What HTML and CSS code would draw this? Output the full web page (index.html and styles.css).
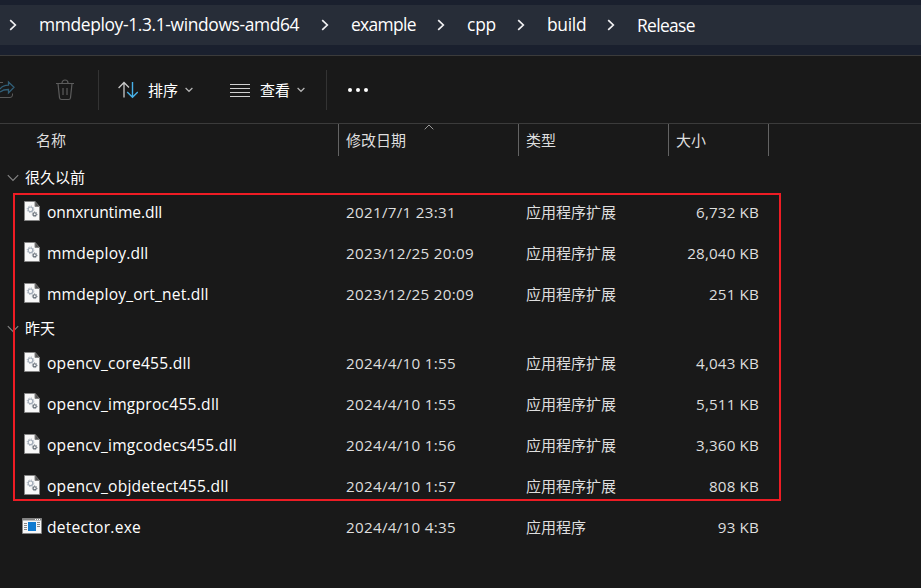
FILE: index.html
```html
<!DOCTYPE html>
<html lang="zh-CN">
<head>
<meta charset="utf-8">
<title>Release</title>
<link rel="stylesheet" href="styles.css">
</head>
<body>
<svg class="defs" width="0" height="0">
  <symbol id="next" viewBox="0 0 8 12"><path d="M1.2 1.2 6.3 6 1.2 10.8" fill="none" stroke="#f0f0f2" stroke-width="1.7"/></symbol>
  <symbol id="down" viewBox="0 0 8 6"><path d="M.6 1 4 4.3 7.4 1" fill="none" stroke="#b5b5b5" stroke-width="1.2"/></symbol>
  <symbol id="fold" viewBox="0 0 12 8"><path d="M.8 1.2 6 6.4 11.2 1.2" fill="none" stroke="#858585" stroke-width="1.1"/></symbol>
  <symbol id="dll" viewBox="0 0 16 20">
    <path d="M.5.5H11L15.5 5.500V19.500H.5z" fill="#f8f8f8" stroke="#858585"/>
    <path d="M11 .5V5.500H15.500" fill="#555" stroke="#858585"/>
    <circle cx="6.500" cy="8.300" r="2.300" fill="none" stroke="#a3adb9" stroke-width="1.200"/>
    <circle cx="6.500" cy="8.300" r="3.300" fill="none" stroke="#a3adb9" stroke-width="1" stroke-dasharray="1.200 1.392"/>
    <circle cx="10.700" cy="13.300" r="1.600" fill="none" stroke="#626b75" stroke-width="1.100"/>
    <circle cx="10.700" cy="13.300" r="2.400" fill="none" stroke="#626b75" stroke-width=".8" stroke-dasharray=".9 .985"/>
  </symbol>
  <symbol id="exe" viewBox="0 0 20 16">
    <path d="M.5.5h19v15H.5z" fill="#f7f7f7" stroke="#858585"/>
    <path d="M1 1h18v1.500H1z" fill="#858585"/>
    <path d="M13 1.500h1m1 0h1m1 0h1" stroke="#fff"/>
    <path d="M2 5.500h3m-3 2h3m-3 2h3m-3 2h3M15 4.500h3m-3 2h3m-3 2h3" stroke="#888"/>
    <path d="M6 4h8v9H6z" fill="#117bd0"/>
  </symbol>
</svg>

<header class="address">
  <nav class="crumbs">
    <svg class="next"><use href="#next"/></svg><span class="crumb c-root">mmdeploy-1.3.1-windows-amd64</span>
    <svg class="next"><use href="#next"/></svg><span class="crumb c-example">example</span>
    <svg class="next"><use href="#next"/></svg><span class="crumb c-cpp">cpp</span>
    <svg class="next"><use href="#next"/></svg><span class="crumb c-build">build</span>
    <svg class="next"><use href="#next"/></svg><span class="crumb c-release">Release</span>
  </nav>
</header>

<div class="toolbar">
  <svg class="share" viewBox="0 0 15 20"><path d="M0 2.500h3M0 17.500h10a2.500 2.500 0 0 0 2.500-2.500v-1.500" fill="none" stroke="#5a5a5a"/><path d="M0 12Q3 9.500 8.500 9.500v3.500L14 7.300 8.500 2v3.200Q2.500 5.500 0 9" fill="none" stroke="#315f78" stroke-width="1.300"/></svg>
  <svg class="trash" viewBox="0 0 20 22"><path d="M1 4.500h18M7 4a3 3 0 0 1 6 0M3 4.500l1.500 14.300q.2 1.700 2 1.700h7q1.800 0 2-1.700L17 4.500M8 9v7M12 9v7" fill="none" stroke="#5c5c5c" stroke-width="1.200"/></svg>
  <div class="tool tool-sort">
    <svg class="sort" viewBox="0 0 20 18"><path d="M6 16.500V1.500M.6 7 6 1.500 11 6.500" fill="none" stroke="#c9c9c9" stroke-width="1.300"/><path d="M14.500 1v15M9.200 11l5.300 5.300L19.800 11" fill="none" stroke="#47b1e8" stroke-width="1.400"/></svg>
    <span>排序</span><svg class="down"><use href="#down"/></svg>
  </div>
  <div class="tool tool-view">
    <svg class="lines" viewBox="0 0 20 14"><path d="M0 1.500h20M0 5.500h20M0 9.500h20M0 13.500h20" stroke="#d0d0d0"/></svg>
    <span>查看</span><svg class="down"><use href="#down"/></svg>
  </div>
  <div class="tool tool-more"><i></i><i></i><i></i></div>
</div>

<main class="files">
  <div class="columns">
    <span class="col">名称</span>
    <span class="col">修改日期<svg class="asc" viewBox="0 0 10 6"><path d="M.7 5.300 5 1l4.300 4.300" fill="none" stroke="#999"/></svg></span>
    <span class="col">类型</span>
    <span class="col">大小</span>
  </div>
  <div class="group"><svg class="fold"><use href="#fold"/></svg><span>很久以前</span></div>
  <div class="row"><svg class="dll"><use href="#dll"/></svg><span class="name tight">onnxruntime.dll</span><span class="date">2021/7/1 23:31</span><span class="type">应用程序扩展</span><span class="size">6,732 KB</span></div>
  <div class="row"><svg class="dll"><use href="#dll"/></svg><span class="name">mmdeploy.dll</span><span class="date">2023/12/25 20:09</span><span class="type">应用程序扩展</span><span class="size">28,040 KB</span></div>
  <div class="row"><svg class="dll"><use href="#dll"/></svg><span class="name">mmdeploy_ort_net.dll</span><span class="date">2023/12/25 20:09</span><span class="type">应用程序扩展</span><span class="size">251 KB</span></div>
  <div class="group"><svg class="fold"><use href="#fold"/></svg><span>昨天</span></div>
  <div class="row"><svg class="dll"><use href="#dll"/></svg><span class="name wide">opencv_core455.dll</span><span class="date">2024/4/10 1:55</span><span class="type">应用程序扩展</span><span class="size">4,043 KB</span></div>
  <div class="row"><svg class="dll"><use href="#dll"/></svg><span class="name wide">opencv_imgproc455.dll</span><span class="date">2024/4/10 1:55</span><span class="type">应用程序扩展</span><span class="size">5,511 KB</span></div>
  <div class="row"><svg class="dll"><use href="#dll"/></svg><span class="name wide">opencv_imgcodecs455.dll</span><span class="date">2024/4/10 1:56</span><span class="type">应用程序扩展</span><span class="size">3,360 KB</span></div>
  <div class="row"><svg class="dll"><use href="#dll"/></svg><span class="name wide">opencv_objdetect455.dll</span><span class="date">2024/4/10 1:57</span><span class="type">应用程序扩展</span><span class="size">808 KB</span></div>
  <div class="row"><svg class="exe"><use href="#exe"/></svg><span class="name wide">detector.exe</span><span class="date">2024/4/10 4:35</span><span class="type">应用程序</span><span class="size">93 KB</span></div>
  <div class="highlight"></div>
</main>
</body>
</html>
```
FILE: styles.css
```css
* { box-sizing: border-box; }
body {
  margin: 0;
  height: 588px;
  overflow: hidden;
  background: #191919;
  color: #dedede;
  font: 15.2px/20px "Open Sans", "Noto Sans CJK SC", sans-serif;
}
svg { display: block; flex: none; }
.defs { position: absolute; }

.address {
  height: 56px;
  padding: 5px 0 10px;
  background: #1a202e;
  border-bottom: 1px solid #3b3b3b;
}
.crumbs {
  display: flex;
  align-items: center;
  height: 40px;
  padding-left: 9px;
  background: #272d38;
  color: #fff;
  font-size: 17.4px;
  line-height: 24px;
  white-space: nowrap;
}
.next { width: 8px; height: 12px; margin-right: 22px; }
.crumb { flex: none; margin-right: 21px; padding-bottom: 3px; }
.c-root { width: 261px; letter-spacing: -0.36px; }
.c-example { width: 65px; letter-spacing: -0.66px; }
.c-cpp { width: 29px; letter-spacing: -0.2px; }
.c-build { width: 39px; letter-spacing: -0.3px; }
.c-release { padding: 0; letter-spacing: -0.66px; }

.toolbar {
  display: flex;
  align-items: center;
  height: 68px;
  border-bottom: 1px solid #3b3b3b;
  color: #fff;
  font-size: 15px;
}
.share { width: 15px; height: 20px; }
.trash { width: 20px; height: 22px; margin: 0 23px 0 40px; }
.tool { display: flex; align-items: center; }
.tool-sort { height: 40px; padding-left: 19px; border-left: 1px solid #333; }
.sort { width: 20px; height: 18px; margin-right: 10px; }
.tool span { width: 30px; }
.down { width: 8px; height: 6px; margin-left: 7px; }
.tool-view { margin-left: 37px; }
.lines { width: 20px; height: 14px; margin-right: 10px; }
.tool-more { height: 40px; margin-left: 21px; padding-left: 20.5px; gap: 4px; border-left: 1px solid #333; }
.tool-more i { width: 4px; height: 4px; border-radius: 50%; background: #fff; }

.files { position: relative; }
.columns { display: grid; grid-template-columns: 339px 180px 150px 100px; height: 32px; margin-bottom: 8px; font-size: 15px; }
.col { position: relative; padding: 6px 0 0 7px; border-right: 1px solid #636363; }
.col:first-child { padding-left: 36px; }
.asc { position: absolute; left: 84.5px; top: 0; width: 10px; height: 6px; }
.group { display: flex; align-items: center; height: 28px; padding-left: 7px; color: #fff; font-size: 15px; }
.group span { padding-bottom: 2px; }
.fold { width: 12px; height: 8px; margin-right: 6px; }
.row {
  display: grid;
  grid-template-columns: 23px 299px 180px 150px 83px;
  align-items: center;
  height: 41px;
  padding-left: 24px;
  white-space: nowrap;
}
.name, .date, .size { padding-bottom: 2px; }
.name { color: #fff; font-size: 15.6px; letter-spacing: 0.17px; }
.name.tight { letter-spacing: -0.08px; }
.name.wide { letter-spacing: 0.24px; }
.date { letter-spacing: 0.29px; }
.type { padding-bottom: 2px; font-size: 15px; }
.size { text-align: right; letter-spacing: 0.15px; }
.dll { width: 16px; height: 20px; margin-top: -3px; }
.exe { width: 20px; height: 16px; margin: -3px 0 0 -2px; }
.highlight {
  position: absolute;
  left: 13px;
  top: 69px;
  width: 768px;
  height: 308px;
  border: 2px solid #ed1c24;
}
```
